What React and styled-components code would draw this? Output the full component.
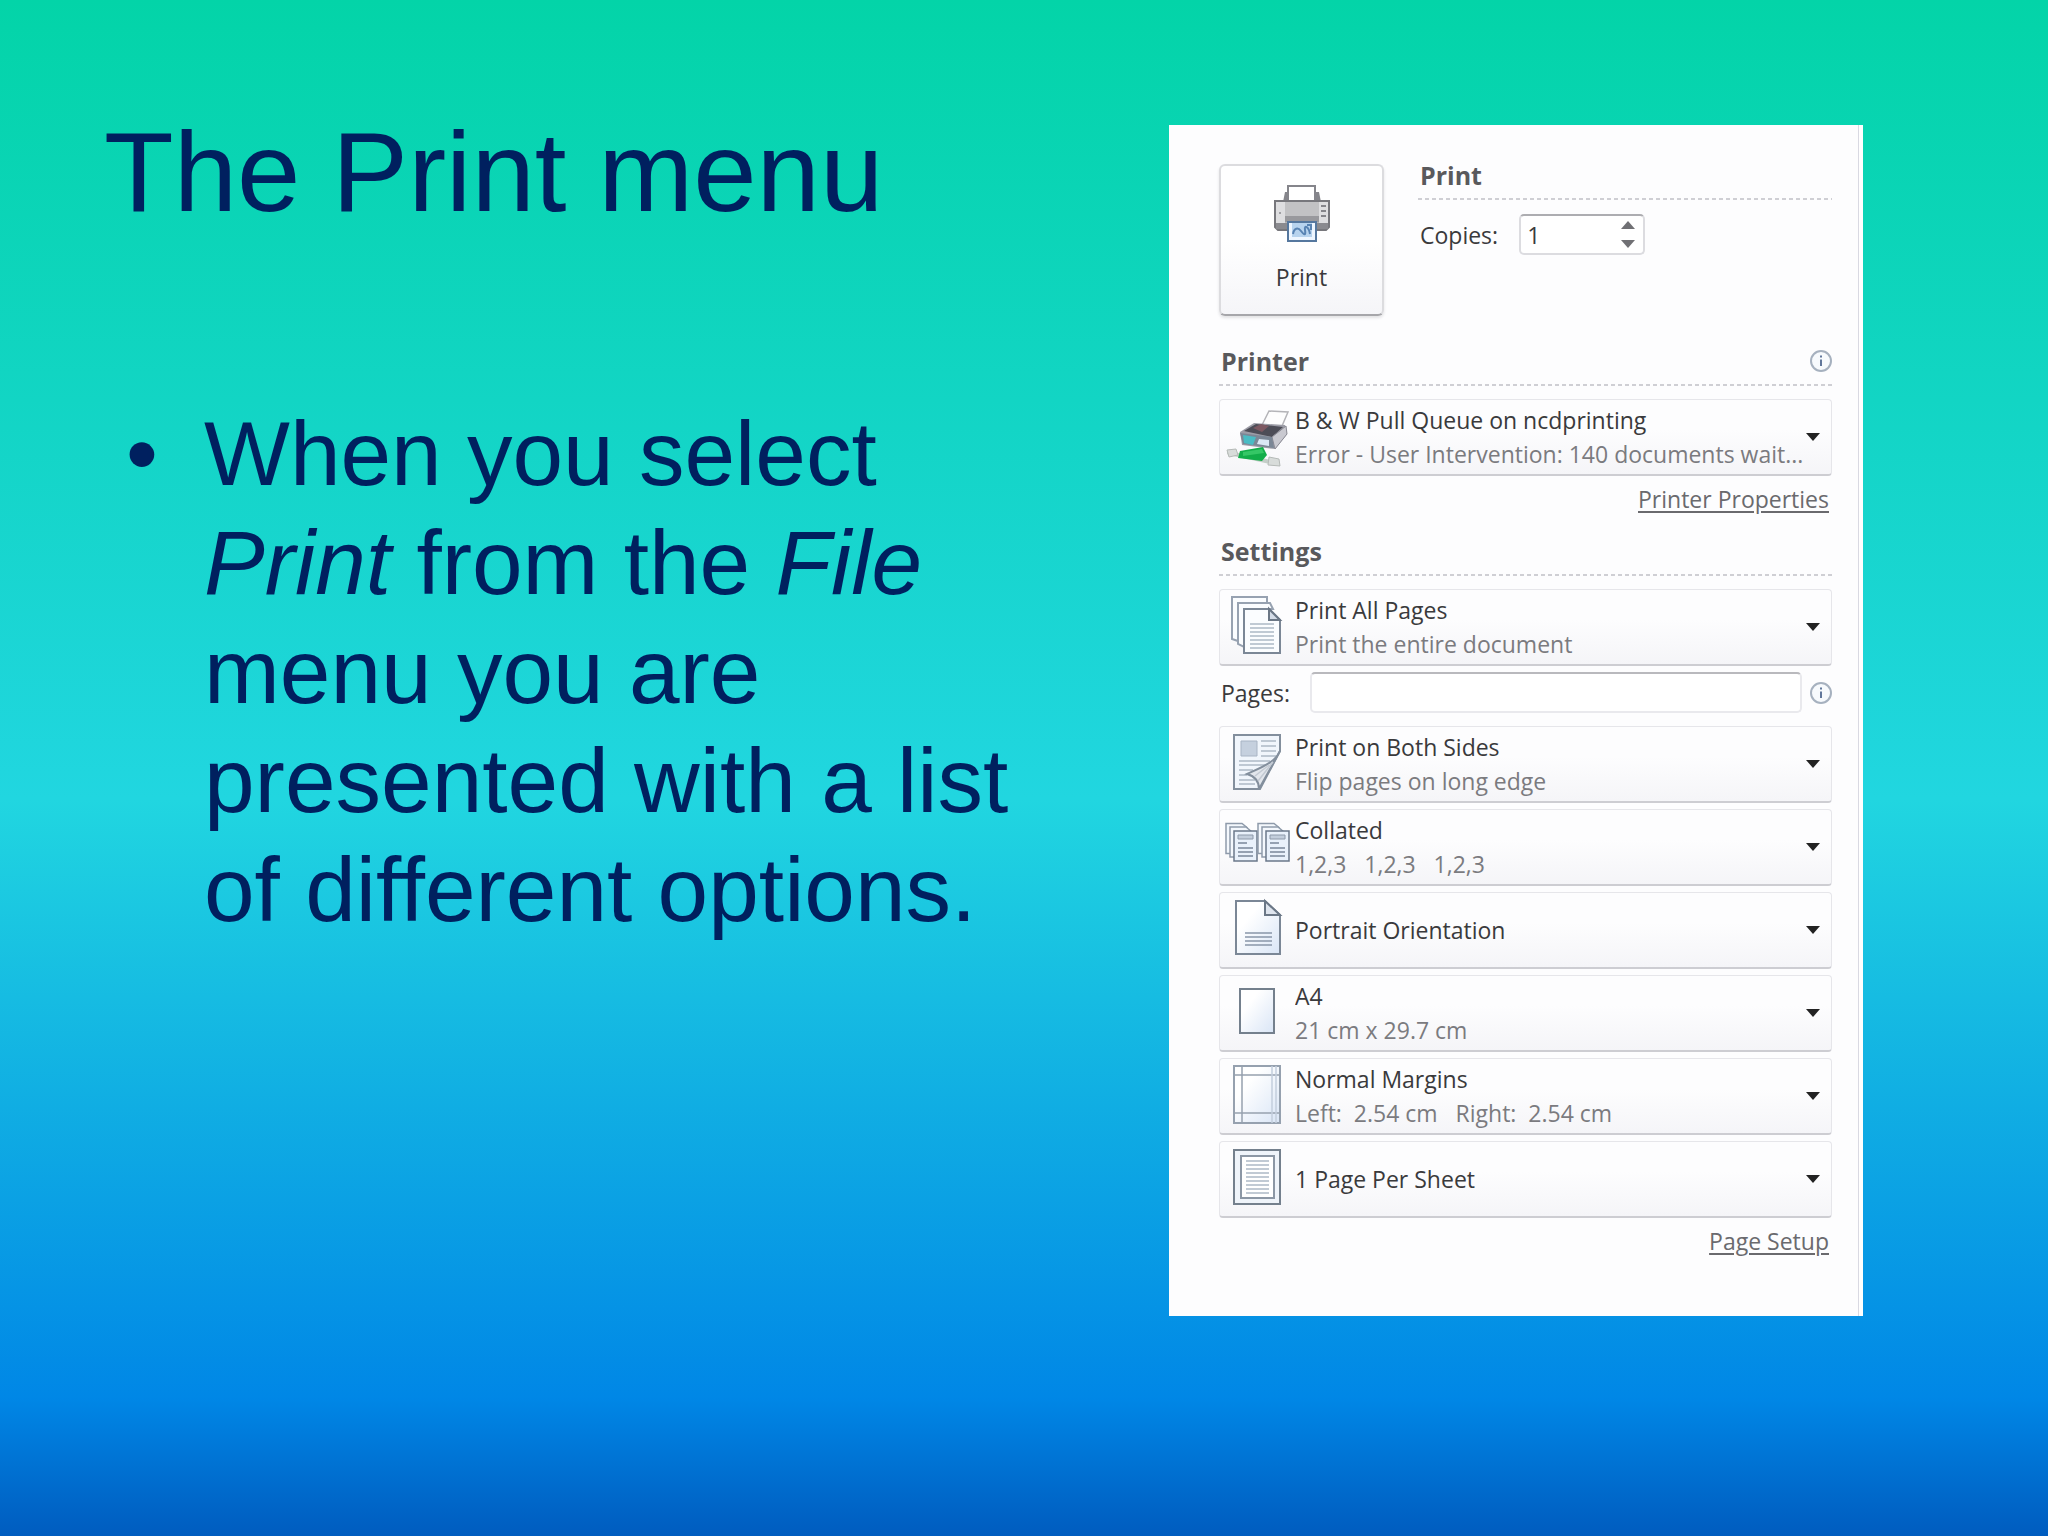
import React, { useState } from 'react'
import styled, { createGlobalStyle } from 'styled-components'

const settings = [
  {
    label: 'Duplex',
    icon: 'bothSides',
    options: ['Print on Both Sides', 'Print One Sided'],
    detail: 'Flip pages on long edge',
  },
  {
    label: 'Collation',
    icon: 'collated',
    options: ['Collated', 'Uncollated'],
    detail: '1,2,3   1,2,3   1,2,3',
  },
  {
    label: 'Orientation',
    icon: 'portrait',
    options: ['Portrait Orientation', 'Landscape Orientation'],
  },
  {
    label: 'Paper size',
    icon: 'paper',
    options: ['A4', 'A3', 'A5'],
    detail: '21 cm x 29.7 cm',
  },
  {
    label: 'Margins',
    icon: 'margins',
    options: ['Normal Margins', 'Narrow Margins'],
    detail: 'Left:  2.54 cm   Right:  2.54 cm',
  },
  {
    label: 'Pages per sheet',
    icon: 'sheet',
    options: ['1 Page Per Sheet', '2 Pages Per Sheet'],
  },
]

const lines = (x1, x2, ys, stroke = '#adb8c6') =>
  ys.map((y) => <path key={y} d={`M${x1} ${y}H${x2}`} stroke={stroke} strokeWidth="1.5" />)

const Stack = ({ x }) => (
  <g transform={`translate(${x} 0)`} fill="#f4f8fd" stroke="#8e9aaa" strokeWidth="1.5">
    <path d="M1 9.5h16l5 4v26H1z" />
    <path d="M5 13h16l6 5v25H5z" />
    <path d="M9 17h23v30H9z" stroke="#6b788a" fill="#e9f1fb" />
    <path d="M13 21h15v4H13z" fill="#c3cedc" strokeWidth="1" />
    {lines(13, 22, [29], '#78869a')}
    {lines(13, 28, [34, 38, 42], '#78869a')}
  </g>
)

const icons = {
  networkPrinter: (
    <>
      <path d="M36 23 44 7l19 1-9 21z" fill="#fdfdfd" stroke="#b4b4b8" strokeWidth="1.5" />
      <path d="M15 28 29 19l31 2 2 9-12 15-33-4z" fill="#9c9ca6" />
      <path d="M19 27 31 20l27 3-11 10z" fill="#4d4d57" />
      <path d="M28 24 36 20l8 2-7 6z" fill="#7d5962" />
      <path d="M47 33 61 22l1 8-12 15z" fill="#c9c9d0" stroke="#8a8a94" />
      <path d="M15 29 47 33l2 11-31-4z" fill="#7b8796" />
      <path d="M18 31 31 33l-3 8-9-2z" fill="#49bcc4" />
      <path d="M34 35 44 36v6l-12-2z" fill="#dbe8f5" />
      <path d="M4 49 50 59" stroke="#c4cec8" strokeWidth="4" strokeLinecap="round" />
      <path d="M2 46 11 45l2 6-9 2zM44 53l10 2 1 7-12-1z" fill="#d8dcda" stroke="#b5bab7" />
      <path d="M15 47 38 43l4 8-5 6-24-3z" fill="#12ad49" />
      <path d="M18 48 37 45l2 4-21 3z" fill="#35c766" />
    </>
  ),
  allPages: (
    <>
      <g fill="#fbfdff" stroke="#97a2b1" strokeWidth="2">
        <path d="M7 3h35v8H13v36l-6-2z" />
        <path d="M13 9h32l3 6H19v38l-6-3z" />
        <path d="M19 15h25l11 11v33H19z" stroke="#7b8796" />
      </g>
      <path d="M44 15v11h11z" fill="#d4dce7" stroke="#6b7786" strokeWidth="2" />
      {lines(25, 49, [30, 34, 38, 42, 46, 50, 54])}
    </>
  ),
  bothSides: (
    <>
      <path d="M9 4h46v16L35 58H9z" fill="#f1f6fc" stroke="#838f9d" strokeWidth="2" />
      <path d="M16 10h16v15H16z" fill="#c5d0de" stroke="#a8b4c4" />
      {lines(36, 51, [10, 15, 20, 25])}
      {lines(14, 45, [30, 34])}
      {lines(14, 28, [39])}
      {lines(14, 22, [44])}
      {lines(14, 30, [49, 53])}
      <path d="M55 20C51 31 35 37 22 43c7 2 12 6 12 15z" fill="#e2e6ec" stroke="#838f9d" strokeWidth="2" />
      <path d="M48 31 33 50M44 34 30 45" stroke="#c3cad3" strokeWidth="1.5" />
    </>
  ),
  collated: (
    <>
      <Stack x={0} />
      <Stack x={32} />
    </>
  ),
  portrait: (
    <>
      <path d="M11 4h29l15 14v39H11z" fill="url(#sheetFill)" stroke="#7b8796" strokeWidth="2" />
      <path d="M40 4v14h15z" fill="#dfe5ee" stroke="#6b7786" strokeWidth="2" />
      {lines(20, 47, [36, 40, 44, 48], '#8896a9')}
    </>
  ),
  paper: <path d="M15 9h34v44H15z" fill="url(#sheetFill)" stroke="#74808d" strokeWidth="2" />,
  margins: (
    <>
      <path d="M9 3h46v57H9z" fill="url(#sheetFill)" stroke="#96a1af" strokeWidth="2" />
      <path d="M17 3v57M9 12h46M9 50h46" stroke="#96a1af" strokeWidth="1.5" />
      <path d="M47 3v57M51 3v57" stroke="#c3cedd" strokeWidth="1.5" />
    </>
  ),
  sheet: (
    <>
      <path d="M9 4h46v54H9z" fill="#eff4fa" stroke="#74808d" strokeWidth="2" />
      <path d="M16 10h33v42H16z" fill="#fff" stroke="#8c97a5" strokeWidth="2" />
      {lines(21, 44, [15, 19, 23, 27, 31, 35, 39, 43, 47])}
    </>
  ),
}

const PrinterDrawing = () => (
  <svg width="58" height="58" viewBox="0 0 58 58" aria-hidden="true">
    <path d="M12 7h4v10h-6zM42 7h4l2 10h-6z" fill="#85858b" />
    <path d="M15 1h27v16H15z" fill="#fff" stroke="#85858b" strokeWidth="2" />
    <path d="M2 16h54v26l-3 3H5l-3-3z" fill="#b4b4b7" stroke="#77777c" strokeWidth="2" />
    <path d="M3 17h9v21H3zM46 17h9v21h-9z" fill="#dedee0" />
    <path d="M12 17h34v14H12z" fill="#c2c2c4" />
    <path d="M12 31h34v6H12z" fill="#99999d" />
    <path d="M3 38h52v6H3z" fill="#8a8a8f" />
    <path d="M48 21h5M48 26h5M48 31h5" stroke="#85858a" strokeWidth="2" />
    <circle cx="7" cy="28" r="1" fill="#8b8b90" />
    <path d="M15 37h28v19H15z" fill="#eef6ff" stroke="#55779e" strokeWidth="2" />
    <path d="M19 38h20v14H19z" fill="#b7d3ee" />
    <path d="M20 49c1-6 5-7 8-3s5 5 4-1 4-3 5 4M34 40h4v5" fill="none" stroke="#5883b3" strokeWidth="2" />
  </svg>
)

const InfoIcon = () => (
  <svg width="22" height="22" viewBox="0 0 22 22" aria-hidden="true">
    <circle cx="11" cy="11" r="10" fill="#f7fafd" stroke="#a6b1bf" strokeWidth="2" />
    <path d="M11 9.500v6.500M11 5.500v2" stroke="#61779b" strokeWidth="2" />
  </svg>
)

const Triangle = ({ up, color }) => (
  <svg width="14" height="8" viewBox="0 0 14 8" aria-hidden="true">
    <path d={up ? 'M0 8h14L7 0z' : 'M0 0h14L7 8z'} fill={color} />
  </svg>
)

const Dropdown = ({ label, icon, options, detail }) => (
  <Row>
    <RowIcon viewBox="0 0 66 66" aria-hidden="true">{icons[icon]}</RowIcon>
    <RowText>
      <RowSelect aria-label={label}>
        {options.map((o) => <option key={o}>{o}</option>)}
      </RowSelect>
      {detail && <Detail>{detail}</Detail>}
    </RowText>
    <Triangle color="#222" />
  </Row>
)

export default function App() {
  const [copies, setCopies] = useState(1)
  const [pages, setPages] = useState('')

  return (
    <Slide>
      <GlobalStyle />
      <section>
        <Title>The Print menu</Title>
        <Bullets>
          <li>
            <p>
              When you select <em>Print</em> from the <em>File</em> menu you are presented with a
              list of different options.
            </p>
          </li>
        </Bullets>
      </section>

      <Panel>
        <svg width="0" height="0" display="block" aria-hidden="true">
          <linearGradient id="sheetFill" x1="0" y1="0" x2="1" y2="1">
            <stop offset="0.3" stopColor="#fff" />
            <stop offset="1" stopColor="#d9e5f6" />
          </linearGradient>
        </svg>
        <Top>
          <PrintButton type="button">
            <PrinterDrawing />
            Print
          </PrintButton>
          <div>
            <Heading>Print</Heading>
            <Copies>
              <label htmlFor="copies">Copies:</label>
              <Spinner>
                <input
                  id="copies"
                  type="number"
                  min="1"
                  value={copies}
                  onChange={(e) => setCopies(Number(e.target.value))}
                />
                <SpinButtons>
                  <button type="button" aria-label="More copies" onClick={() => setCopies(copies + 1)}>
                    <Triangle up color="#707074" />
                  </button>
                  <button type="button" aria-label="Fewer copies" onClick={() => setCopies(Math.max(1, copies - 1))}>
                    <Triangle color="#707074" />
                  </button>
                </SpinButtons>
              </Spinner>
            </Copies>
          </div>
        </Top>

        <Heading>
          Printer
          <InfoIcon />
        </Heading>
        <Rows>
          <Dropdown
            label="Printer"
            icon="networkPrinter"
            options={['B & W Pull Queue on ncdprinting']}
            detail="Error - User Intervention: 140 documents wait..."
          />
        </Rows>
        <LinkLine>
          <a href="#printer-properties">Printer Properties</a>
        </LinkLine>

        <Heading>Settings</Heading>
        <Rows>
          <Dropdown
            label="Pages to print"
            icon="allPages"
            options={['Print All Pages', 'Print Current Page']}
            detail="Print the entire document"
          />
        </Rows>
        <PagesLine>
          <label htmlFor="pages">Pages:</label>
          <PagesInput id="pages" type="text" value={pages} onChange={(e) => setPages(e.target.value)} />
          <InfoIcon />
        </PagesLine>
        <Rows>
          {settings.map((s) => <Dropdown key={s.label} {...s} />)}
        </Rows>
        <LinkLine>
          <a href="#page-setup">Page Setup</a>
        </LinkLine>
      </Panel>
    </Slide>
  )
}

const GlobalStyle = createGlobalStyle`
  * {
    box-sizing: border-box;
  }
  body, h1, h2, ul, p {
    margin: 0;
    padding: 0;
  }
  button, input, select {
    font: inherit;
    color: inherit;
  }
`

const Slide = styled.main`
  min-height: 100vh;
  display: grid;
  grid-template-columns: minmax(0, 1fr) 694px;
  align-items: start;
  gap: 130px;
  padding: 115px 185px 115px 104px;
  color: #00205f;
  font-family: "Liberation Sans", Arial, sans-serif;
  background: linear-gradient(#03d4a8 0%, #21d6e0 52%, #0087e6 91%, #005cbf 100%);
`

const Title = styled.h1`
  font-size: 114px;
  line-height: 114px;
  font-weight: 400;
`

const Bullets = styled.ul`
  margin-top: 170px;
  padding-left: 22px;
  list-style: none;
  font-size: 91px;
  line-height: 109px;

  li {
    display: grid;
    grid-template-columns: 78px 1fr;
  }
  li::before {
    content: "•";
  }
`

const Panel = styled.section`
  margin-top: 10px;
  padding: 34px 31px 59px 50px;
  background: #fdfdfe;
  box-shadow: inset -4px 0 #fff, inset -5px 0 #d9d9e2;
  color: #3a3a3c;
  font-family: "Open Sans", "Noto Sans", sans-serif;
  font-size: 23px;
  line-height: 32px;
`

const Top = styled.div`
  display: grid;
  grid-template-columns: 165px 1fr;
  gap: 34px;
  margin-bottom: 29px;
`

const PrintButton = styled.button`
  height: 152px;
  margin-top: 5px;
  padding: 19px 0 0;
  display: flex;
  flex-direction: column;
  align-items: center;
  gap: 18px;
  border: 2px solid #dcdcdf;
  border-bottom-color: #a6a6aa;
  border-radius: 6px;
  background: linear-gradient(#fff 50%, #f5f5f8);
  box-shadow: 0 2px 3px #e2e2e4;
`

const Heading = styled.h2`
  display: flex;
  justify-content: space-between;
  align-items: center;
  padding: 0 0 9px 2px;
  color: #59595c;
  font-size: 25px;
  line-height: 32px;
  font-weight: 700;
  background: repeating-linear-gradient(90deg, #cfcfd4 0 4px, transparent 4px 7px) left bottom / 100% 2px no-repeat;
`

const Copies = styled.div`
  display: flex;
  align-items: center;
  gap: 21px;
  padding: 14px 0 0 2px;
`

const Spinner = styled.div`
  width: 126px;
  height: 41px;
  display: flex;
  border: 2px solid #dcdce0;
  border-top-color: #adadb1;
  border-radius: 5px;
  background: #fff;

  input {
    flex: 1;
    min-width: 0;
    padding: 0 6px;
    border: 0;
    outline: 0;
    background: none;
    appearance: textfield;
  }
  input::-webkit-inner-spin-button {
    appearance: none;
  }
`

const SpinButtons = styled.div`
  display: grid;
  width: 30px;

  button {
    display: grid;
    place-items: center;
    padding: 0;
    border: 0;
    background: none;
  }
`

const Rows = styled.div`
  display: grid;
  gap: 6px;
  margin-top: 13px;
`

const Row = styled.div`
  height: 77px;
  display: flex;
  align-items: center;
  padding: 0 11px 0 5px;
  border: 1px solid #e6e6ea;
  border-bottom: 2px solid #cdcdd2;
  border-radius: 4px;
  background: linear-gradient(#fdfdfe 40%, #f5f5f8);
`

const RowIcon = styled.svg`
  width: 66px;
  height: 66px;
  margin-right: 4px;
  flex: none;
`

const RowText = styled.div`
  flex: 1;
  min-width: 0;
`

const RowSelect = styled.select`
  display: block;
  width: 100%;
  height: 34px;
  padding: 0;
  border: 0;
  outline: 0;
  background: none;
  appearance: none;
`

const Detail = styled.div`
  color: #7b7b7f;
  line-height: 34px;
  white-space: pre;
`

const LinkLine = styled.div`
  margin: 7px 3px 20px;
  text-align: right;

  &:last-child {
    margin-bottom: 0;
  }
  a {
    color: #6a6a6e;
    text-underline-offset: 3px;
  }
`

const PagesLine = styled.div`
  display: flex;
  align-items: center;
  gap: 8px;
  margin-top: 6px;
  padding-left: 2px;

  label {
    width: 81px;
  }
`

const PagesInput = styled.input`
  flex: 1;
  min-width: 0;
  height: 41px;
  padding: 0 8px;
  border: 2px solid #e9e9ed;
  border-top-color: #b9b9bd;
  border-radius: 5px;
  background: #fff;
`
